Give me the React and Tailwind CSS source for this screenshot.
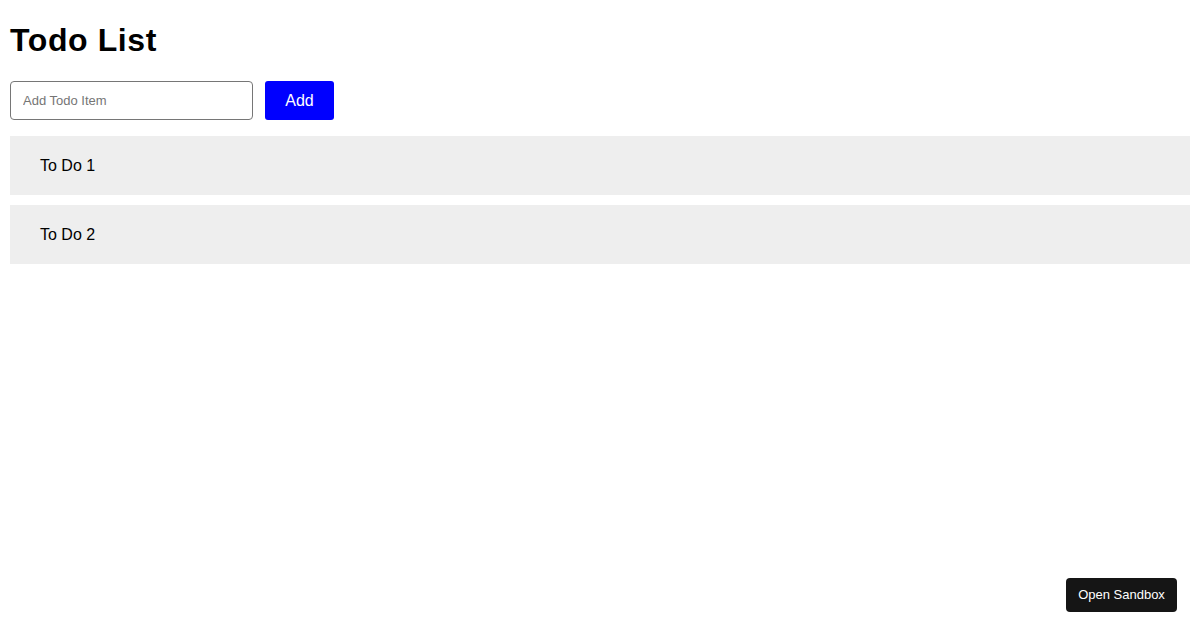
export default function App() {
  const items = ["To Do 1", "To Do 2"];
  return (
    <div className="min-h-[630px] bg-white px-[10px] pt-[22px] text-black" style={{ fontFamily: '"Liberation Sans", Arial, sans-serif' }}>
      <h1 className="text-[32px] font-bold leading-[37px] tracking-[0.6px] m-0">Todo List</h1>
      <div className="mt-[22px] flex items-center">
        <input
          type="text"
          placeholder="Add Todo Item"
          className="w-[243px] h-[39px] border border-[#767676] rounded-[4px] pl-[12px] pb-[1px] text-[13px] placeholder:text-[#757575] outline-none"
        />
        <button className="ml-[12px] w-[69px] h-[39px] bg-[#0000ff] text-white text-[16px] rounded-[3px]">
          Add
        </button>
      </div>
      <div className="mt-[16px] flex flex-col gap-[10px]">
        {items.map((t) => (
          <div key={t} className="h-[59px] bg-[#eeeeee] pl-[30px] flex items-center text-[16px]">
            {t}
          </div>
        ))}
      </div>
      <button className="fixed right-[23px] bottom-[18px] w-[111px] h-[34px] bg-[#151515] text-white text-[13px] rounded-[4px]">
        Open Sandbox
      </button>
    </div>
  );
}
